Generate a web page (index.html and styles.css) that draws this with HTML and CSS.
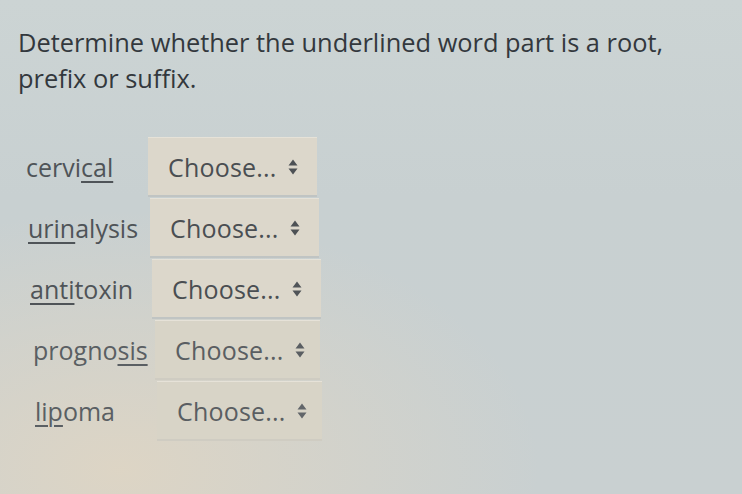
FILE: index.html
```html
<!DOCTYPE html>
<html>
<head>
<meta charset="utf-8">
<link rel="stylesheet" href="styles.css">
</head>
<body>
<div class="page">
  <p class="question">Determine whether the underlined word part is a root, prefix or suffix.</p>
  <div class="matches">
    <div class="row">
      <span class="term">cervi<u>cal</u></span>
      <div class="select"><span class="choose">Choose...</span><span class="arrows"><svg width="10" height="16" viewBox="0 0 10 16"><path d="M5 0.5 L9.5 6.5 L0.5 6.5 Z M0.5 9.5 L9.5 9.5 L5 15.5 Z" fill="#4d5155"/></svg></span></div>
    </div>
    <div class="row">
      <span class="term"><u>urin</u>alysis</span>
      <div class="select"><span class="choose">Choose...</span><span class="arrows"><svg width="10" height="16" viewBox="0 0 10 16"><path d="M5 0.5 L9.5 6.5 L0.5 6.5 Z M0.5 9.5 L9.5 9.5 L5 15.5 Z" fill="#4d5155"/></svg></span></div>
    </div>
    <div class="row">
      <span class="term"><u>anti</u>toxin</span>
      <div class="select"><span class="choose">Choose...</span><span class="arrows"><svg width="10" height="16" viewBox="0 0 10 16"><path d="M5 0.5 L9.5 6.5 L0.5 6.5 Z M0.5 9.5 L9.5 9.5 L5 15.5 Z" fill="#505458"/></svg></span></div>
    </div>
    <div class="row">
      <span class="term">progno<u>sis</u></span>
      <div class="select"><span class="choose">Choose...</span><span class="arrows"><svg width="10" height="16" viewBox="0 0 10 16"><path d="M5 0.5 L9.5 6.5 L0.5 6.5 Z M0.5 9.5 L9.5 9.5 L5 15.5 Z" fill="#5a5e62"/></svg></span></div>
    </div>
    <div class="row">
      <span class="term"><u>lip</u>oma</span>
      <div class="select"><span class="choose">Choose...</span><span class="arrows"><svg width="10" height="16" viewBox="0 0 10 16"><path d="M5 0.5 L9.5 6.5 L0.5 6.5 Z M0.5 9.5 L9.5 9.5 L5 15.5 Z" fill="#62666a"/></svg></span></div>
    </div>
  </div>
</div>
</body>
</html>
```

FILE: styles.css
```css
html, body {
  margin: 0;
  padding: 0;
}
body {
  width: 742px;
  height: 494px;
  overflow: hidden;
  font-family: "Open Sans", "Noto Sans", sans-serif;
  background:
    radial-gradient(ellipse 420px 260px at 120px 470px, rgba(222, 213, 196, 0.95), rgba(222, 213, 196, 0) 100%),
    linear-gradient(180deg, #ccd4d4 0%, #c8d0d1 40%, #c9d0d1 100%);
}
.page {
  padding: 24px 0 0 18px;
}
.question {
  margin: 0;
  width: 670px;
  font-size: 25.4px;
  line-height: 36px;
  color: #33383d;
}
.matches {
  margin-top: 41px;
  display: flex;
  flex-direction: column;
  gap: 1px;
}
.row {
  display: flex;
  align-items: center;
  height: 60px;
}
.row:nth-child(2) { margin-left: 2px; }
.row:nth-child(3) { margin-left: 4px; }
.row:nth-child(4) { margin-left: 7px; }
.row:nth-child(5) { margin-left: 9px; }
.term {
  width: 122px;
  padding-left: 8px;
  font-size: 25px;
  color: #4f5458;
}
.row:nth-child(4) .term,
.row:nth-child(5) .term { color: #5a5f63; }
.term u {
  text-decoration-thickness: 2px;
  text-underline-offset: 4px;
}
.select {
  box-sizing: border-box;
  width: 169px;
  height: 60px;
  display: flex;
  align-items: center;
  padding-left: 20px;
  background: #dcd7cb;
  border-top: 1px solid #e6e2d8;
  border-bottom: 2px solid #c0c4c3;
}
.row:nth-child(4) .select,
.row:nth-child(5) .select {
  width: 165px;
  background: #d8d4c7;
  border-bottom-color: #cfccc2;
}
.choose {
  font-size: 25px;
  color: #4a4e52;
  width: 105px;
  letter-spacing: 0.2px;
  font-variant-ligatures: none;
}
.row:nth-child(4) .choose,
.row:nth-child(5) .choose { color: #5a5e62; }
.arrows {
  margin-left: 15px;
  display: flex;
  align-items: center;
}
```
